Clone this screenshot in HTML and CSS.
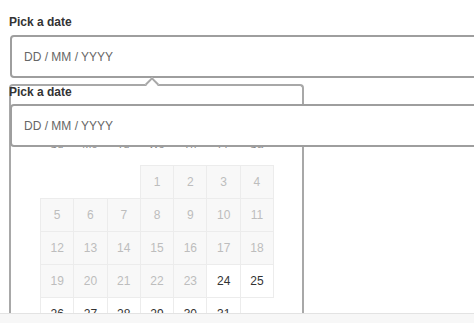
FILE: index.html
```html
<!DOCTYPE html>
<html lang="en">
<head>
<meta charset="utf-8">
<title>Pick a date</title>
<link rel="stylesheet" href="styles.css">
</head>
<body>
<div class="page">
  <div class="label">Pick a date</div>
  <div class="field">DD / MM / YYYY</div>
  <div class="popup">
    <span class="caret"></span>
    <div class="label inner-label">Pick a date</div>
    <div class="field inner-field">DD / MM / YYYY</div>
    <div class="weekdays">
      <span>Su</span><span>Mo</span><span>Tu</span><span>We</span><span>Th</span><span>Fr</span><span>Sa</span>
    </div>
    <div class="days">
      <span class="day off first">1</span><span class="day off">2</span><span class="day off">3</span><span class="day off">4</span>
      <span class="day off">5</span><span class="day off">6</span><span class="day off">7</span><span class="day off">8</span><span class="day off">9</span><span class="day off">10</span><span class="day off">11</span>
      <span class="day off">12</span><span class="day off">13</span><span class="day off">14</span><span class="day off">15</span><span class="day off">16</span><span class="day off">17</span><span class="day off">18</span>
      <span class="day off">19</span><span class="day off">20</span><span class="day off">21</span><span class="day off">22</span><span class="day off">23</span><span class="day">24</span><span class="day">25</span>
      <span class="day">26</span><span class="day">27</span><span class="day">28</span><span class="day">29</span><span class="day">30</span><span class="day">31</span>
    </div>
  </div>
</div>
<div class="hbar"></div>
</body>
</html>
```
FILE: styles.css
```css
html, body {
  margin: 0;
  padding: 0;
  overflow: hidden;
  background: #fff;
  font-family: "Liberation Sans", Arial, sans-serif;
}

.page {
  box-sizing: border-box;
  height: 313px;
  width: 474px;
  overflow: hidden;
  padding: 14px 0 0 9px;
}

.label {
  font-size: 12px;
  line-height: 16px;
  font-weight: bold;
  color: #333;
  margin-bottom: 5px;
}

.field {
  box-sizing: border-box;
  width: 500px;
  height: 43px;
  margin-left: 1px;
  border: 2px solid #9e9e9e;
  border-radius: 4px;
  padding-left: 12px;
  display: flex;
  align-items: center;
  font-size: 12px;
  color: #666;
  background: #fff;
}

.popup {
  position: relative;
  box-sizing: border-box;
  width: 295px;
  height: 300px;
  margin-top: 6px;
  border: 2px solid #a8a8a8;
  border-bottom: 0;
  border-radius: 4px 4px 0 0;
  background: #fff;
}

.caret {
  position: absolute;
  box-sizing: border-box;
  width: 10px;
  height: 10px;
  left: 136px;
  top: -7px;
  background: #fff;
  border-top: 2px solid #a8a8a8;
  border-left: 2px solid #a8a8a8;
  transform: rotate(45deg);
}

.inner-label {
  margin: -2px 0 4px -2px;
}

.inner-field {
  position: relative;
  z-index: 1;
  margin-left: -1px;
}

.weekdays {
  display: grid;
  grid-template-columns: repeat(7, 33.3px);
  margin: -13px 0 0 29px;
  height: 20px;
  line-height: 20px;
  font-size: 11px;
  color: #888;
  text-align: center;
}

.days {
  display: grid;
  grid-template-columns: repeat(7, 33.3px);
  grid-auto-rows: 33px;
  margin: 11px 0 0 29px;
}

.day {
  display: flex;
  align-items: center;
  justify-content: center;
  border: 1px solid #ececec;
  margin: 0 -1px -1px 0;
  font-size: 12px;
  color: #333;
  background: #fff;
}

.day.off {
  background: #f8f8f8;
  color: #bdbdbd;
}

.day.first {
  grid-column-start: 4;
}

.hbar {
  height: 9px;
  border-top: 1px solid #e3e3e3;
  background: #f7f7f7;
}
```
